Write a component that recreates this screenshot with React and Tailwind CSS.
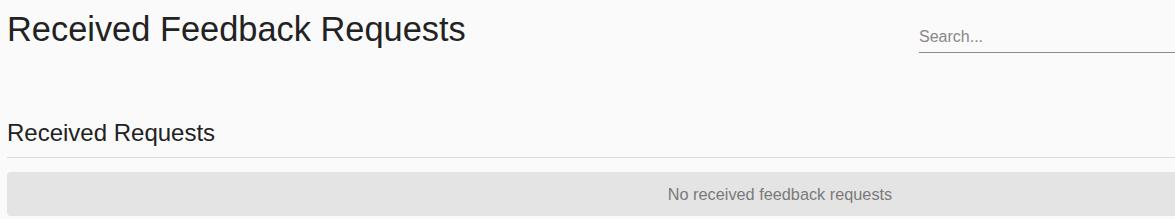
export default function App() {
  return (
    <div className="w-[1175px] h-[219px] overflow-hidden bg-[#fafafa] font-['Liberation_Sans',Arial,sans-serif]">
      <div className="w-[1546px] ml-[7px]">
        <div className="flex items-start h-[53px]">
          <h1 className="w-[912px] shrink-0 text-[34.4px] leading-none mt-[12px] text-[#222]">Received Feedback Requests</h1>
          <div className="w-[634px] shrink-0 mt-[25px]">
            <input
              type="text"
              placeholder="Search..."
              className="w-full bg-transparent border-b border-[#8c8c8c] pb-[5px] text-[16px] leading-[20px] outline-none placeholder:text-[#888]"
            />
          </div>
        </div>
        <h2 className="text-[24px] leading-none mt-[68px] text-[#222]">Received Requests</h2>
        <div className="mt-[12px] border-t border-[#dddddd]" />
        <div className="mt-[14px] h-[44px] rounded-[4px] bg-[#e4e4e4] flex items-center justify-center text-[16.3px] text-[#7a7a7a]">
          No received feedback requests
        </div>
      </div>
    </div>
  );
}
